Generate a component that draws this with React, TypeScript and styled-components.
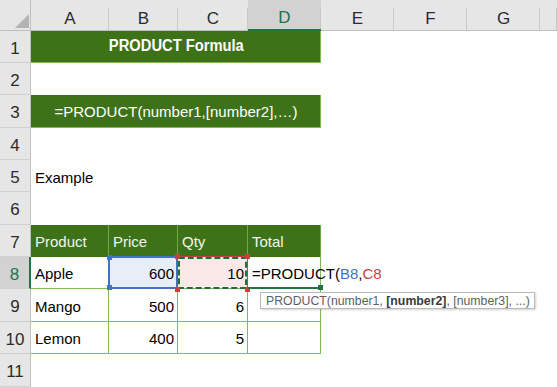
import React from "react";
import styled, { createGlobalStyle } from "styled-components";

const GREEN_DARK = "#3e7218";
const GREEN_LINE = "#7ebc55";
const HEAD_SEP = "#6fa849";
const EXCEL_GREEN = "#217346";
const REF_BLUE = "#4472c4";
const REF_RED = "#c8413f";

const GlobalStyle = createGlobalStyle`
  html, body { margin: 0; padding: 0; background: #fff; overflow: hidden; }
  body { font-family: "Liberation Sans", Arial, sans-serif; }
  * { box-sizing: border-box; }
`;

const Sheet = styled.div`
  display: grid;
  grid-template-columns: 31px 78px 69px 70px 73px 73px 73px 73px 17px;
  grid-template-rows: 31px 32px 32px 33px 32px 32px 33px 32px 32px 33px 32px 33px;
  width: 557px;
  height: 387px;
  overflow: hidden;
  background: #fff;
  font-family: "Liberation Sans", Arial, sans-serif;
  color: #000;
`;

const Corner = styled.div`
  background: #e6e6e6;
  border-right: 1px solid #bfbfbf;
  border-bottom: 1px solid #bfbfbf;
  display: flex;
  align-items: flex-end;
  justify-content: flex-end;
  padding: 0 1px 2px 0;
`;

const ColHeader = styled.div<{ $selected?: boolean }>`
  display: flex;
  align-items: center;
  justify-content: center;
  padding-top: 7px;
  font-size: 17px;
  color: ${(p) => (p.$selected ? EXCEL_GREEN : "#2b2b2b")};
  background: linear-gradient(#c9c9c9, #c9c9c9) right 8px / 1px calc(100% - 8px) no-repeat,
    ${(p) => (p.$selected ? "#d2d2d2" : "#e6e6e6")};
  border-bottom: ${(p) => (p.$selected ? `2px solid ${EXCEL_GREEN}` : "1px solid #bfbfbf")};
`;

const RowHeader = styled.div<{ $selected?: boolean }>`
  grid-column: 1;
  display: flex;
  align-items: center;
  justify-content: center;
  padding-top: 4px;
  font-size: 17px;
  color: ${(p) => (p.$selected ? EXCEL_GREEN : "#2b2b2b")};
  background: ${(p) => (p.$selected ? "#d2d2d2" : "#e6e6e6")};
  border-bottom: 1px solid #d0d0d0;
  border-right: ${(p) => (p.$selected ? `2px solid ${EXCEL_GREEN}` : "1px solid #bfbfbf")};
`;

const Cell = styled.div<{ $align?: "left" | "right" | "center"; $span?: number }>`
  grid-column: span ${(p) => p.$span ?? 1};
  position: relative;
  display: flex;
  align-items: flex-end;
  justify-content: ${(p) =>
    p.$align === "right" ? "flex-end" : p.$align === "center" ? "center" : "flex-start"};
  padding: 0 3px 6px 4px;
  font-size: 15px;
  white-space: nowrap;
  min-width: 0;
`;

const Banner = styled(Cell)`
  background: ${GREEN_DARK};
  color: #fff;
  border-right: 1px solid ${GREEN_LINE};
  border-bottom: 1px solid ${GREEN_LINE};
  padding-bottom: 7px;
`;

const Squeeze = styled.span`
  display: inline-block;
  font-size: 16px;
  font-weight: bold;
  transform: scaleX(0.92);
`;

const HeadCell = styled(Cell)`
  background: ${GREEN_DARK};
  color: #f4f4ec;
  border-right: 1px solid ${HEAD_SEP};
  padding-bottom: 7px;
`;

const TableCell = styled(Cell)<{ $tone?: "plain" | "ref1" | "ref2" | "active" }>`
  background: ${(p) =>
    p.$tone === "ref1" ? "#e8eef8" : p.$tone === "ref2" ? "#fbe8e8" : p.$tone === "active" ? "transparent" : "#fff"};
  border-right: 1px solid ${GREEN_LINE};
  border-bottom: ${(p) => (p.$tone === "active" ? `2px solid ${EXCEL_GREEN}` : `1px solid ${GREEN_LINE}`)};
  overflow: visible;
  z-index: ${(p) => (p.$tone === "active" ? 3 : "auto")};
  padding-bottom: ${(p) => (p.$tone === "active" ? "5px" : "6px")};
`;

const RefFrame = styled.div<{ $color: string; $width: number }>`
  position: absolute;
  top: -1px;
  left: -1px;
  right: -1px;
  bottom: ${(p) => (p.$width === 1 ? "-2px" : "-1px")};
  border: ${(p) => p.$width}px solid ${(p) => p.$color};
  pointer-events: none;
`;

const Ants = styled.svg`
  position: absolute;
  top: 0;
  left: 0;
  width: 100%;
  height: 100%;
  overflow: visible;
`;

const Handle = styled.span<{ $color: string; $x: "left" | "right"; $y: "top" | "bottom" }>`
  position: absolute;
  width: 5px;
  height: 5px;
  background: ${(p) => p.$color};
  ${(p) => p.$x}: -3px;
  ${(p) => p.$y}: -3px;
  z-index: 2;
`;

const Ref = styled.span<{ $color: string }>`
  color: ${(p) => p.$color};
`;

const Tooltip = styled.div`
  position: absolute;
  left: 12px;
  top: 35px;
  width: 275px;
  height: 17px;
  padding: 0 0 0 5px;
  display: flex;
  align-items: center;
  background: #fff;
  border: 1px solid #b9b9b9;
  box-shadow: 1px 1px 2px rgba(0, 0, 0, 0.18);
  font-size: 12.3px;
  color: #5e5e5e;
  z-index: 10;
`;

const TipBold = styled.b`
  color: #3a3a3a;
`;

const columns = ["A", "B", "C", "D", "E", "F", "G", ""];

type Row = { name: string; price: string; qty: string };
const rows: Row[] = [
  { name: "Mango", price: "500", qty: "6" },
  { name: "Lemon", price: "400", qty: "5" },
];

export default function App() {
  return (
    <>
      <GlobalStyle />
      <Sheet>
        <Corner>
          <svg width="14" height="14" viewBox="0 0 14 14">
            <polygon points="14,0 14,14 0,14" fill="#b3b3b3" />
          </svg>
        </Corner>
        {columns.map((c, i) => (
          <ColHeader key={i} $selected={c === "D"}>
            {c}
          </ColHeader>
        ))}

        <RowHeader>1</RowHeader>
        <Banner $span={4} $align="center">
          <Squeeze>PRODUCT Formula</Squeeze>
        </Banner>

        <RowHeader>2</RowHeader>

        <RowHeader>3</RowHeader>
        <Banner $span={4} $align="center">
          =PRODUCT(number1,[number2],…)
        </Banner>

        <RowHeader>4</RowHeader>

        <RowHeader>5</RowHeader>
        <Cell>Example</Cell>

        <RowHeader>6</RowHeader>

        <RowHeader>7</RowHeader>
        <HeadCell>Product</HeadCell>
        <HeadCell>Price</HeadCell>
        <HeadCell>Qty</HeadCell>
        <HeadCell>Total</HeadCell>

        <RowHeader $selected>8</RowHeader>
        <TableCell>Apple</TableCell>
        <TableCell $align="right" $tone="ref1">
          600
          <RefFrame $color={REF_BLUE} $width={2}>
            <Handle $color={REF_BLUE} $x="left" $y="top" />
            <Handle $color={REF_BLUE} $x="left" $y="bottom" />
          </RefFrame>
        </TableCell>
        <TableCell $align="right" $tone="ref2">
          10
          <RefFrame $color={REF_RED} $width={1}>
            <Ants viewBox="0 0 70 33" preserveAspectRatio="none">
              <rect
                x="1"
                y="1"
                width="68"
                height="31"
                fill="none"
                stroke="#1f6b3a"
                strokeWidth="2"
                strokeDasharray="6 3"
              />
            </Ants>
            <Handle $color={REF_RED} $x="left" $y="top" />
            <Handle $color={REF_RED} $x="right" $y="top" />
            <Handle $color={REF_RED} $x="left" $y="bottom" />
            <Handle $color={REF_RED} $x="right" $y="bottom" />
          </RefFrame>
        </TableCell>
        <TableCell $tone="active">
          =PRODUCT(<Ref $color={REF_BLUE}>B8</Ref>,<Ref $color={REF_RED}>C8</Ref>
          <Handle $color={EXCEL_GREEN} $x="right" $y="bottom" />
          <Tooltip>
            PRODUCT(number1,&nbsp;<TipBold>[number2]</TipBold>, [number3], ...)
          </Tooltip>
        </TableCell>

        {rows.map((r, i) => (
          <React.Fragment key={r.name}>
            <RowHeader>{9 + i}</RowHeader>
            <TableCell>{r.name}</TableCell>
            <TableCell $align="right">{r.price}</TableCell>
            <TableCell $align="right">{r.qty}</TableCell>
            <TableCell />
          </React.Fragment>
        ))}

        <RowHeader>11</RowHeader>
      </Sheet>
    </>
  );
}
